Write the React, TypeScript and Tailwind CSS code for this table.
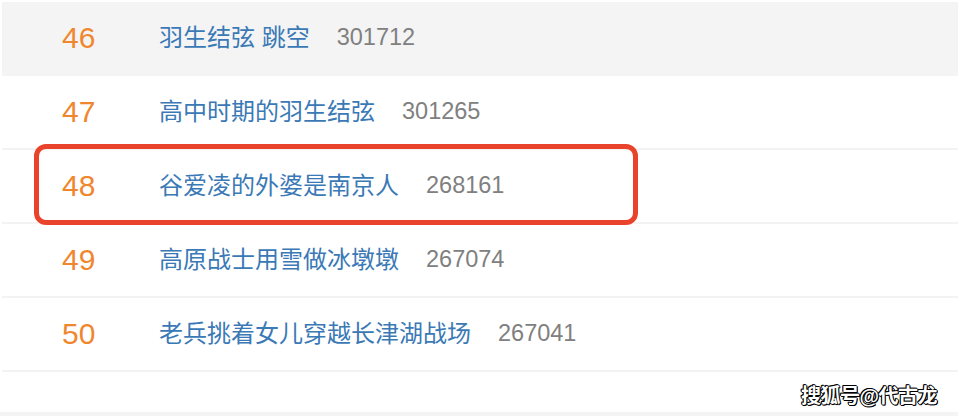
import React from 'react';

interface RankItem {
  rank: number;
  title: string;
  count: string;
}

const items: RankItem[] = [
  { rank: 46, title: '羽生结弦 跳空', count: '301712' },
  { rank: 47, title: '高中时期的羽生结弦', count: '301265' },
  { rank: 48, title: '谷爱凌的外婆是南京人', count: '268161' },
  { rank: 49, title: '高原战士用雪做冰墩墩', count: '267074' },
  { rank: 50, title: '老兵挑着女儿穿越长津湖战场', count: '267041' },
];

const App: React.FC = () => {
  return (
    <div
      className="relative w-[958px] h-[416px] overflow-hidden bg-white flex flex-col"
      style={{ fontFamily: '"Liberation Sans", "Noto Sans CJK SC", sans-serif' }}
    >
      <div className="flex-1 pt-[2px] pl-[2px]">
        {items.map((item, index) => (
          <div
            key={item.rank}
            className={`relative h-[74px] flex items-center border-b-2 ${
              index === 0 ? 'bg-[#f4f4f4] border-[#f4f4f4]' : 'border-[#f3f3f3]'
            }`}
          >
            <div className="w-[157px] pl-[60px] text-[30px] leading-none text-[#f0872f]">{item.rank}</div>
            <div className="text-[24px] leading-none text-[#3a79b6] whitespace-pre">{item.title}</div>
            <div className="ml-[27px] text-[23.5px] leading-none text-[#808080]">{item.count}</div>

            {/* highlight box */}
            {item.rank === 48 && (
              <div className="absolute left-[32px] top-[-6px] w-[604px] h-[81px] border-[5px] border-[#e9432b] rounded-[12px]" />
            )}
          </div>
        ))}
      </div>

      {/* watermark */}
      <div
        className="absolute right-[21px] bottom-[10px] text-[20px] font-bold leading-none text-white tracking-[-0.5px]"
        style={{ textShadow: '1px 0 #000, -1px 0 #000, 0 1px #000, 0 -1px #000, 1px 1px #000, -1px -1px #000' }}
      >
        搜狐号@代古龙
      </div>

      <div className="h-[4px] bg-[#f4f4f4]" />
    </div>
  );
};

export default App;
